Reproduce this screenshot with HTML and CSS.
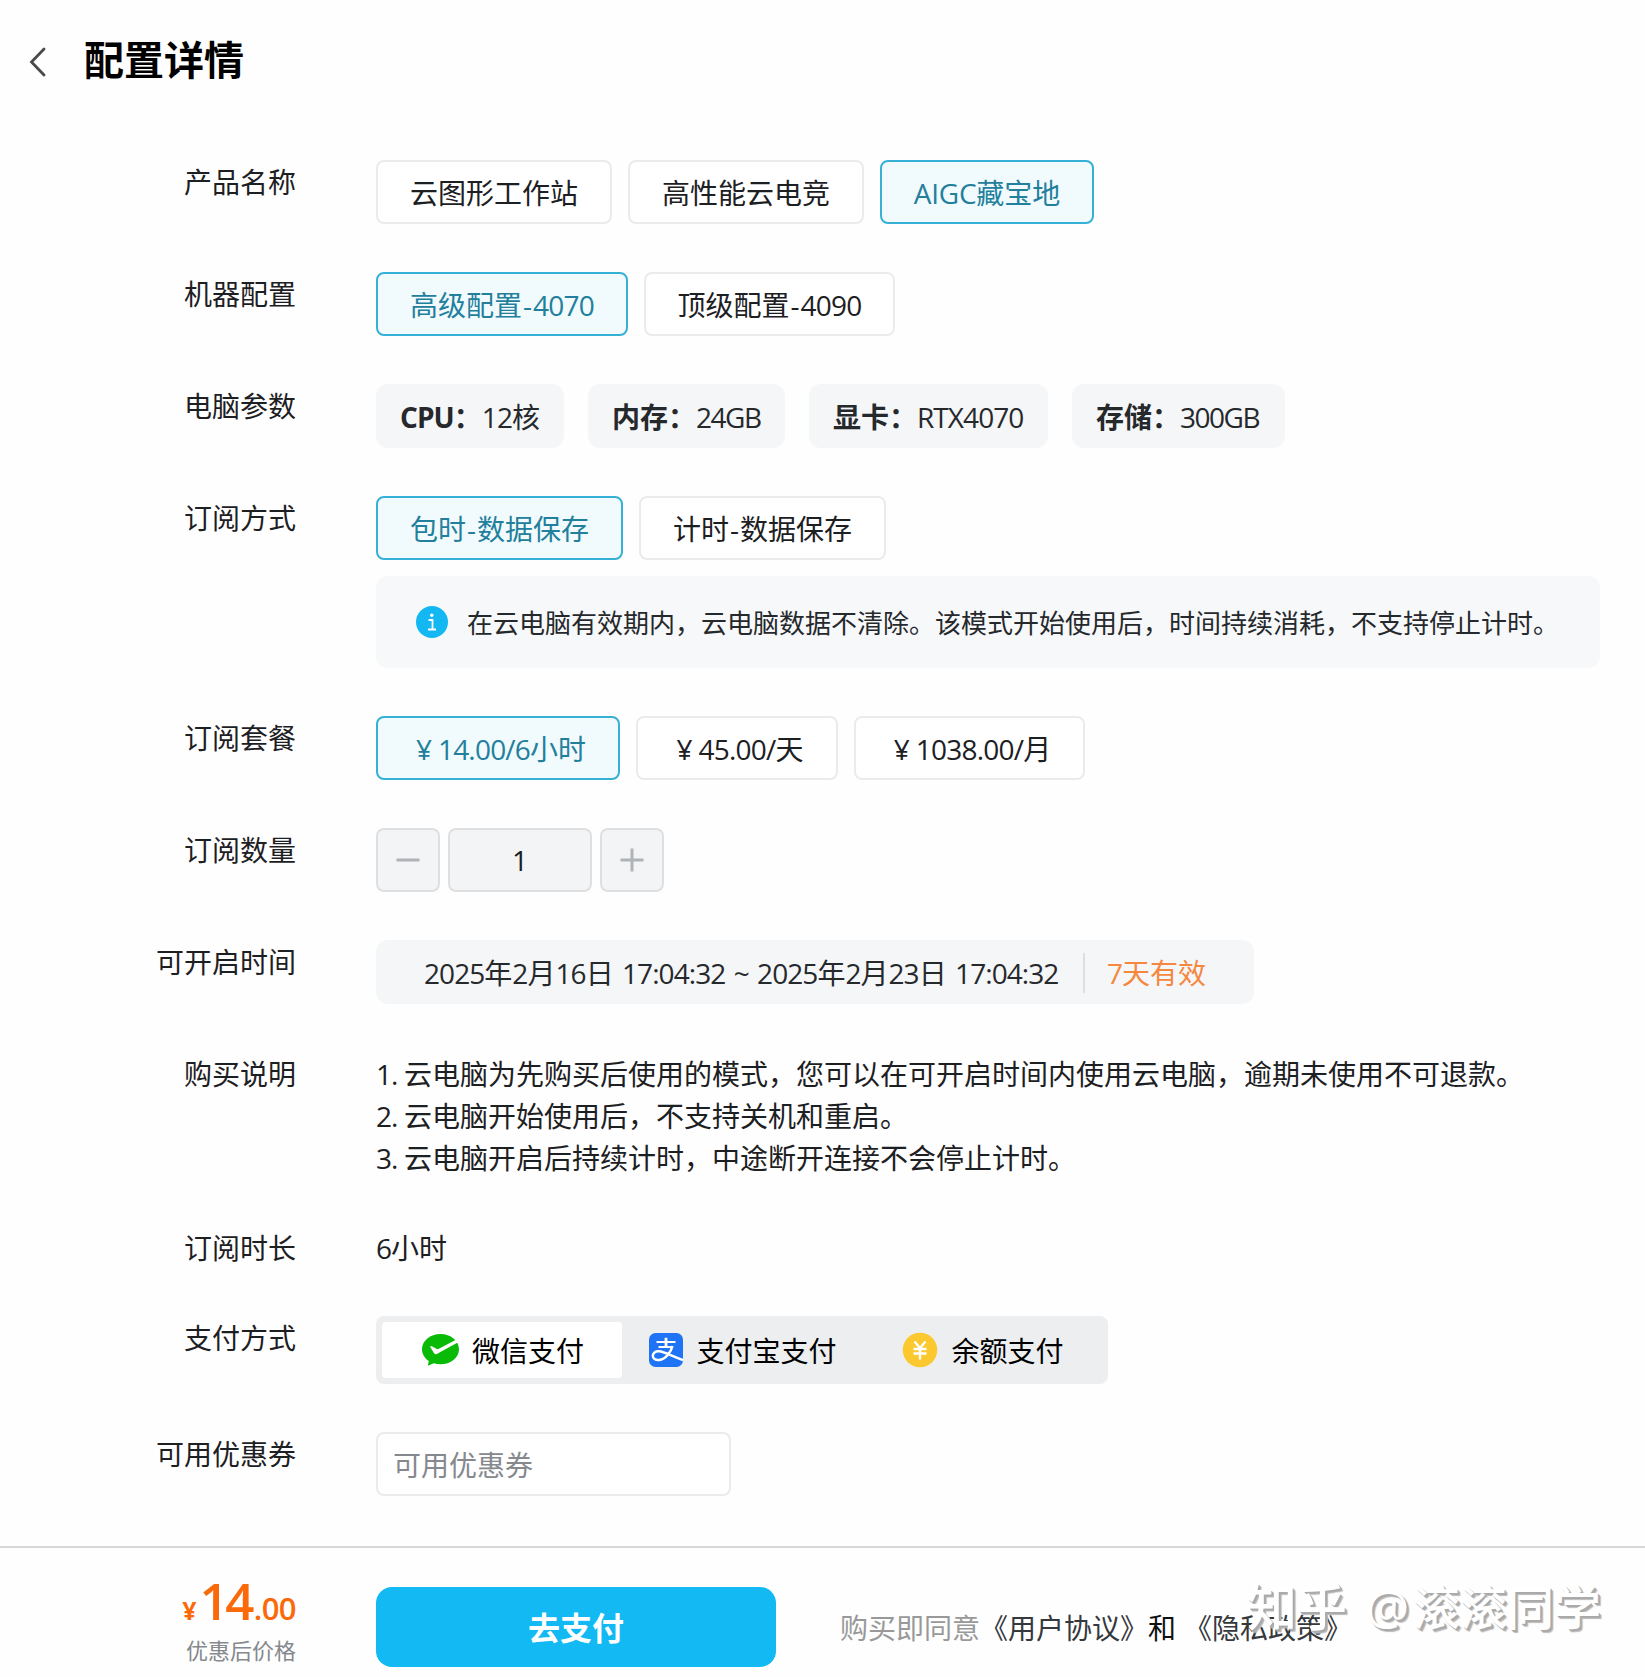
FILE: index.html
```html
<!DOCTYPE html>
<html lang="zh-CN">
<head>
<meta charset="utf-8">
<title>配置详情</title>
<link rel="stylesheet" href="styles.css">
</head>
<body>
<header class="top">
  <svg class="back" width="20" height="32" viewBox="0 0 20 32"><path d="M16 3 3.500 16 16 29" fill="none" stroke="#4a4a4a" stroke-width="2.800" stroke-linecap="round"/></svg>
  <h1>配置详情</h1>
</header>
<main class="form">
  <div class="row"><div class="label">产品名称</div>
    <div class="opts">
      <button class="chip w236">云图形工作站</button>
      <button class="chip w236">高性能云电竞</button>
      <button class="chip w214 on"><span class="caps">AIGC</span>藏宝地</button>
    </div></div>
  <div class="row"><div class="label">机器配置</div>
    <div class="opts">
      <button class="chip w252 on">高级配置<span class="h">-</span><span class="l">4070</span></button>
      <button class="chip w251">顶级配置<span class="h">-</span><span class="l">4090</span></button>
    </div></div>
  <div class="row"><div class="label">电脑参数</div>
    <div class="specs">
      <div class="spec w188"><b><span class="l">CPU</span>：</b><span class="l">12</span>核</div>
      <div class="spec w197"><b>内存：</b><span class="l gb">24GB</span></div>
      <div class="spec w239"><b>显卡：</b><span class="l">RTX4070</span></div>
      <div class="spec w212"><b>存储：</b><span class="l gb">300GB</span></div>
    </div></div>
  <div class="row"><div class="label">订阅方式</div>
    <div class="stack">
      <div class="opts">
        <button class="chip w247 on">包时<span class="h">-</span>数据保存</button>
        <button class="chip w247">计时<span class="h">-</span>数据保存</button>
      </div>
      <div class="tip">
        <svg width="32" height="32" viewBox="0 0 32 32"><circle cx="16" cy="16" r="16" fill="#13b8f2"/><circle cx="15.800" cy="9.300" r="1.700" fill="#fff"/><path d="M12.500 14h4v9M12 23.500h8" fill="none" stroke="#fff" stroke-width="1.800"/></svg>
        <span>在云电脑有效期内，云电脑数据不清除。该模式开始使用后，时间持续消耗，不支持停止计时。</span>
      </div>
    </div></div>
  <div class="row"><div class="label">订阅套餐</div>
    <div class="opts">
      <button class="chip w244 on"><span class="yen">¥</span><span class="l">14.00/6</span>小时</button>
      <button class="chip w202"><span class="yen">¥</span><span class="l">45.00/</span>天</button>
      <button class="chip w231"><span class="yen">¥</span><span class="l">1038.00/</span>月</button>
    </div></div>
  <div class="row"><div class="label">订阅数量</div>
    <div class="stepper">
      <button class="step"><svg width="24" height="24" viewBox="0 0 24 24"><path d="M.5 12h23" stroke="#b0b3b6" stroke-width="3"/></svg></button>
      <div class="count"><span>1</span></div>
      <button class="step"><svg width="24" height="24" viewBox="0 0 24 24"><path d="M.5 12h23M12 .5v23" stroke="#b0b3b6" stroke-width="3"/></svg></button>
    </div></div>
  <div class="row"><div class="label">可开启时间</div>
    <div class="period">
      <span class="range"><span class="l">2025</span>年<span class="l">2</span>月<span class="l">16</span>日<span class="l"> 17:04:32 ~ 2025</span>年<span class="l">2</span>月<span class="l">23</span>日<span class="l"> 17:04:32</span></span>
      <span class="valid"><span class="l">7</span>天有效</span>
    </div></div>
  <div class="row"><div class="label">购买说明</div>
    <div class="notes">
      <p><span class="n">1.</span>云电脑为先购买后使用的模式，您可以在可开启时间内使用云电脑，逾期未使用不可退款。</p>
      <p><span class="n">2.</span>云电脑开始使用后，不支持关机和重启。</p>
      <p><span class="n">3.</span>云电脑开启后持续计时，中途断开连接不会停止计时。</p>
    </div></div>
  <div class="row"><div class="label">订阅时长</div>
    <div class="notes"><p><span class="l">6</span>小时</p></div></div>
  <div class="row"><div class="label">支付方式</div>
    <div class="pay">
      <div class="tab active">
        <svg width="37" height="34" viewBox="0 0 37 34"><path d="M18.500 1C8.300 1 0 7.800 0 16.200c0 4.800 2.700 9 6.800 11.800L5.800 32.800l6-2.600c2.100.7 4.300 1.100 6.700 1.100C28.700 31.300 37 24.600 37 16.200 37 7.800 28.700 1 18.500 1Z" fill="#09bb07"/><path d="M8.500 14.500c-.6-1.200.3-2 1.400-1.300l4.500 2.600c.7.400 1.300.4 2 .1L34.500 6.400l1.700 2.800L14.800 21c-1.300.6-2.100.2-2.700-.8Z" fill="#fff"/></svg>
        <span>微信支付</span></div>
      <div class="tab">
        <svg width="34" height="34" viewBox="0 0 34 34"><rect width="34" height="34" rx="6.500" fill="#1f74f5"/><g fill="none" stroke="#fff"><path d="M7.500 9h19M9.500 14h14" stroke-width="2.200"/><path d="M17 4.800V14" stroke-width="2.800"/><path d="M23.500 13c-1.600 6-6.700 13.400-13.200 14-4 .4-6.500-1.600-6.500-4.200 0-2.800 2.600-4.700 6-4.500 6 .4 13.500 5 24.200 8.700" stroke-width="2.500"/></g></svg>
        <span>支付宝支付</span></div>
      <div class="tab">
        <svg width="36" height="36" viewBox="0 0 36 36"><circle cx="18" cy="18" r="17.300" fill="#fbc92f"/><path d="m12.500 9.500 5.500 6.500 5.500-6.500M11.500 17h13M11.500 21.500h13M18 16v11.500" fill="none" stroke="#fff" stroke-width="2.300"/></svg>
        <span>余额支付</span></div>
    </div></div>
  <div class="row"><div class="label">可用优惠券</div>
    <div class="coupon"><span>可用优惠券</span></div></div>
</main>
<footer class="bar">
  <div class="price">
    <div class="amount"><span class="sign">¥</span><span class="int">14</span><span class="dec">.00</span></div>
    <div class="sub">优惠后价格</div>
  </div>
  <button class="go">去支付</button>
  <div class="agree">购买即同意<a>《用户协议》</a><i>和</i><a class="second">《隐私政策》</a></div>
  <div class="mark"><span>知乎</span><span class="at">@</span><span class="name">滚滚同学</span></div>
</footer>
</body>
</html>
```
FILE: styles.css
```css
* { box-sizing: border-box; }
body {
  margin: 0;
  height: 1677px;
  overflow: hidden;
  background: #fefefe;
  color: #1d2023;
  font: 28px/42px "Open Sans", "Noto Sans CJK SC", sans-serif;
  text-spacing-trim: space-all;
}
button { font: inherit; color: inherit; padding: 0; }
svg { display: block; flex: none; }
p, h1 { margin: 0; }

.l { letter-spacing: -0.93px; white-space: pre; }
.l.gb { letter-spacing: -1.5px; }
.caps { letter-spacing: -0.2px; }
.h { display: inline-block; width: 11px; text-align: center; }
.yen { display: inline-block; width: 28px; text-align: center; }
.n { display: inline-block; width: 28px; letter-spacing: -0.9px; }
.chip .l { letter-spacing: -0.8px; }

.top { display: flex; align-items: center; height: 160px; padding: 0 0 36px 28px; }
.top h1 { margin: -4px 0 0 36px; font-size: 40px; line-height: 60px; font-weight: 700; color: #000; }

.form { display: flex; flex-direction: column; gap: 48px; height: 1386px; }
.row { display: flex; gap: 80px; }
.label { width: 296px; padding-top: 1px; margin-bottom: -1px; text-align: right; flex: none; }

.opts { display: flex; gap: 16px; }
.chip {
  display: flex; align-items: center; justify-content: center;
  height: 64px; padding-top: 1px;
  border: 2px solid #ebebec; border-radius: 8px; background: #fff;
  white-space: nowrap;
}
.chip.on { border-color: #37b0d6; background: #f1fafc; color: #22809c; }
.w188 { width: 188px; }
.w197 { width: 197px; }
.w202 { width: 202px; }
.w212 { width: 213px; }
.w214 { width: 214px; }
.w231 { width: 231px; }
.w236 { width: 236px; }
.w239 { width: 239px; }
.w244 { width: 244px; }
.w247 { width: 247px; }
.w251 { width: 251px; }
.w252 { width: 252px; }

.specs { display: flex; gap: 24px; }
.spec {
  height: 64px; padding: 2px 0 0 24px; line-height: 63px; white-space: nowrap;
  border-radius: 12px; background: #f5f6f8; color: #26292c;
}

.stack { display: flex; flex-direction: column; gap: 16px; }
.tip {
  display: flex; align-items: center; gap: 19px;
  width: 1224px; height: 92px; padding-left: 40px;
  border-radius: 12px; background: #f7f8fa;
  font-size: 26px; color: #26292c; white-space: nowrap;
}
.tip svg { margin-bottom: 1px; }
.tip span { padding-top: 2px; }

.stepper { display: flex; gap: 8px; }
.step, .count {
  display: flex; align-items: center; justify-content: center;
  width: 64px; height: 64px;
  border: 2px solid #dedfe1; border-radius: 8px; background: #f3f4f6;
}
.count { width: 144px; }

.period {
  display: flex; align-items: center;
  width: 878px; height: 64px; padding: 1px 0 0 48px;
  border-radius: 12px; background: #f5f6f8; white-space: nowrap; color: #26292c;
}
.range { width: 660px; word-spacing: 2px; }
.valid {
  height: 40px; padding-left: 22px; line-height: 40px;
  margin-left: -1px; border-left: 2px solid #dcdee0; color: #f5873f;
}

.notes { padding-top: 1px; margin-bottom: -1px; white-space: nowrap; }

.pay { display: flex; height: 68px; padding: 6px; border-radius: 8px; background: #edeeef; color: #000; }
.tab { display: flex; align-items: center; justify-content: center; gap: 13px; width: 240px; padding-left: 2px; border-radius: 4px; }
.tab span { padding-top: 1px; }
.tab.active { background: #fff; }

.coupon {
  display: flex; align-items: center; width: 355px; height: 64px; padding: 1px 0 0 15px;
  border: 2px solid #ebebec; border-radius: 8px; background: #fff; color: #85888d;
}

.bar { position: relative; display: flex; height: 131px; border-top: 2px solid #d8d8d8; }
.price { width: 296px; padding-top: 22px; text-align: right; flex: none; }
.amount { display: flex; justify-content: flex-end; align-items: baseline; height: 60px; line-height: 60px; color: #fb6a0a; white-space: nowrap; }
.sign { font-size: 25px; font-weight: 700; margin-right: 3px; }
.int { font-size: 51px; font-weight: 600; letter-spacing: -3.500px; }
.dec { margin-left: 3px; font-size: 31px; font-weight: 600; letter-spacing: -0.6px; }
.sub { margin-top: 3px; font-size: 22px; line-height: 34px; color: #85888d; }
.go {
  width: 400px; height: 80px; margin: 39px 0 0 80px; padding-top: 2px;
  border: 0; border-radius: 16px; background: #13b9f2;
  color: #fff; font-size: 32px; font-weight: 700;
}
.agree { display: flex; margin: 59px 0 0 64px; color: #999; white-space: nowrap; }
.agree a { color: #35383c; }
.agree i { font-style: normal; color: #111; }
.agree .second { margin-left: 8px; }
.mark {
  position: absolute; left: 1247px; top: 24px; display: flex;
  font-size: 50px; line-height: 70px; font-weight: 500; color: #fff;
  text-shadow: 1px 1px 0 #aaa, 2px 2px 0 #aaa, 3px 3px 1px #bbb;
  white-space: nowrap;
}
.at { margin-left: 19px; font-size: 48px; font-weight: 400; }
.name { font-size: 47px; margin-left: 4px; }
```
